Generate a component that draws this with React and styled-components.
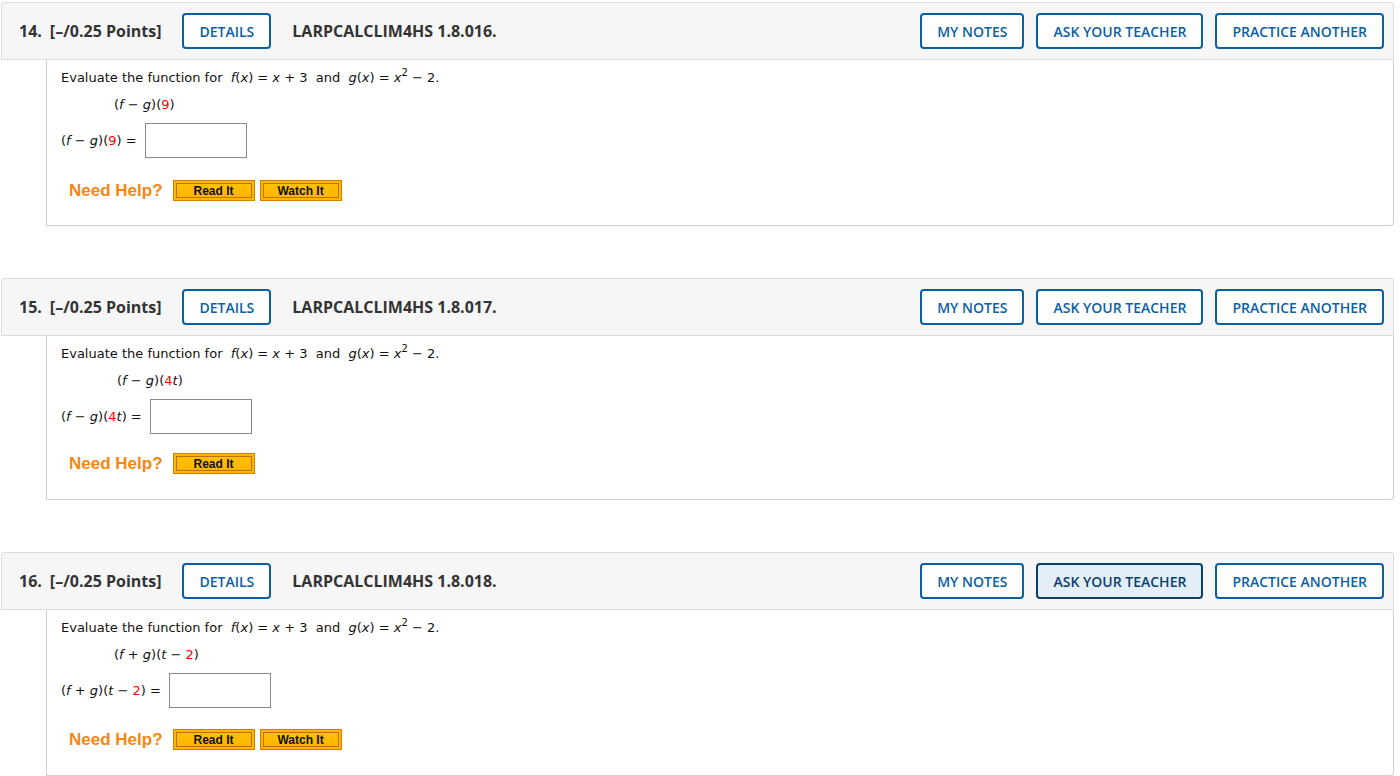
import React from "react";
import styled, { createGlobalStyle, css } from "styled-components";

const Global = createGlobalStyle`
  html, body { margin: 0; padding: 0; background: #fff; }
  body { font-family: "DejaVu Sans", Verdana, sans-serif; }
`;

const Page = styled.div`
  padding: 2px 0 0 1px;
  width: 1393px;
`;

const Question = styled.section`
  margin-bottom: 52px;
  &:last-child {
    margin-bottom: 0;
  }
`;

const Header = styled.header`
  display: flex;
  align-items: center;
  height: 56px;
  padding: 0 9px 0 17px;
  background: #f6f6f6;
  border: 1px solid #dcdcdc;
  border-radius: 3px 3px 0 0;
  font-family: "Open Sans", sans-serif;
  font-weight: 700;
  font-size: 16px;
  color: #333;
`;

const Num = styled.span`
  margin-right: 8px;
`;

const Points = styled.span`
  margin-right: 21px;
`;

const Code = styled.span`
  margin-left: 21px;
`;

const Spacer = styled.div`
  flex: 1;
`;

const Actions = styled.div`
  display: flex;
  gap: 12px;
`;

const HeadButton = styled.button`
  height: 36px;
  padding: 0 ${(p) => p.$pad || 14}px;
  border: 2px solid #0d5fa3;
  border-radius: 4px;
  background: #fff;
  color: #0d5fa3;
  font-family: "Open Sans", sans-serif;
  font-weight: 600;
  font-size: 14px;
  cursor: pointer;
  ${(p) =>
    p.$active &&
    css`
      background: #e3eef7;
      border-color: #0b3f6e;
      color: #0b3f6e;
    `}
`;

const Body = styled.div`
  margin-left: 45px;
  border: 1px solid #cfcfcf;
  border-top: none;
  border-bottom-right-radius: 4px;
  padding: 9px 14px ${(p) => p.$bottom || 24}px;
  font-size: 13px;
  color: #111;
`;

const Line = styled.div`
  line-height: 18px;
  white-space: pre;
`;

const Expr = styled(Line)`
  margin: 9px 0 0 ${(p) => 53 + (p.$indent || 0)}px;
`;

const AnswerRow = styled.div`
  display: flex;
  align-items: center;
  margin-top: 9px;
  white-space: pre;
`;

const Input = styled.input`
  box-sizing: border-box;
  width: 102px;
  height: 35px;
  margin-left: 8px;
  border: 1px solid #8a8a8a;
  background: #fff;
`;

const I = styled.i`
  font-style: italic;
`;

const Red = styled.span`
  color: #ff0000;
`;

const Sup = styled.sup`
  font-size: 10px;
  vertical-align: 6px;
  line-height: 0;
`;

const HelpRow = styled.div`
  display: flex;
  align-items: center;
  margin: ${(p) => p.$top || 21}px 0 0 8px;
  gap: 5px;
`;

const HelpLabel = styled.span`
  font-family: "Liberation Sans", Arial, sans-serif;
  font-weight: 700;
  font-size: 17px;
  color: #f7860f;
  margin-right: 5px;
`;

const HelpButton = styled.button`
  box-sizing: border-box;
  width: 82px;
  height: 21px;
  padding: 2px;
  border: 1px solid #d97d00;
  background: #fdb700;
  cursor: pointer;
  display: flex;
`;

const HelpInner = styled.span`
  flex: 1;
  display: flex;
  align-items: center;
  justify-content: center;
  border: 1px solid #c06f00;
  background: linear-gradient(#ffc107, #fdb600);
  font-family: "Liberation Sans", Arial, sans-serif;
  font-weight: 700;
  font-size: 12px;
  color: #111;
`;

const Given = () => (
  <Line>
    Evaluate the function for  <I>f</I>(<I>x</I>) = <I>x</I> + 3  and  <I>g</I>(<I>x</I>) = <I>x</I>
    <Sup>2</Sup> − 2.
  </Line>
);

const questions = [
  {
    n: "14.",
    code: "LARPCALCLIM4HS 1.8.016.",
    expr: (
      <>
        (<I>f</I> − <I>g</I>)(<Red>9</Red>)
      </>
    ),
    watch: true,
    helpTop: 22,
    bottom: 24,
  },
  {
    n: "15.",
    code: "LARPCALCLIM4HS 1.8.017.",
    expr: (
      <>
        (<I>f</I> − <I>g</I>)(<Red>4</Red>
        <I>t</I>)
      </>
    ),
    indent: 3,
    watch: false,
    helpTop: 19,
    bottom: 25,
  },
  {
    n: "16.",
    code: "LARPCALCLIM4HS 1.8.018.",
    expr: (
      <>
        (<I>f</I> + <I>g</I>)(<I>t</I> − <Red>2</Red>)
      </>
    ),
    watch: true,
    active: true,
    helpTop: 21,
    bottom: 25,
  },
];

export default function App() {
  return (
    <>
      <Global />
      <Page>
        {questions.map((q) => (
          <Question key={q.n}>
            <Header>
              <Num>{q.n}</Num>
              <Points>[–/0.25 Points]</Points>
              <HeadButton $pad={15}>DETAILS</HeadButton>
              <Code>{q.code}</Code>
              <Spacer />
              <Actions>
                <HeadButton $pad={15}>MY NOTES</HeadButton>
                <HeadButton $pad={15} $active={q.active}>
                  ASK YOUR TEACHER
                </HeadButton>
                <HeadButton $pad={15}>PRACTICE ANOTHER</HeadButton>
              </Actions>
            </Header>
            <Body $bottom={q.bottom}>
              <Given />
              <Expr $indent={q.indent}>{q.expr}</Expr>
              <AnswerRow>
                {q.expr} =
                <Input aria-label="answer" />
              </AnswerRow>
              <HelpRow $top={q.helpTop}>
                <HelpLabel>Need Help?</HelpLabel>
                <HelpButton>
                  <HelpInner>Read It</HelpInner>
                </HelpButton>
                {q.watch && (
                  <HelpButton>
                    <HelpInner>Watch It</HelpInner>
                  </HelpButton>
                )}
              </HelpRow>
            </Body>
          </Question>
        ))}
      </Page>
    </>
  );
}
